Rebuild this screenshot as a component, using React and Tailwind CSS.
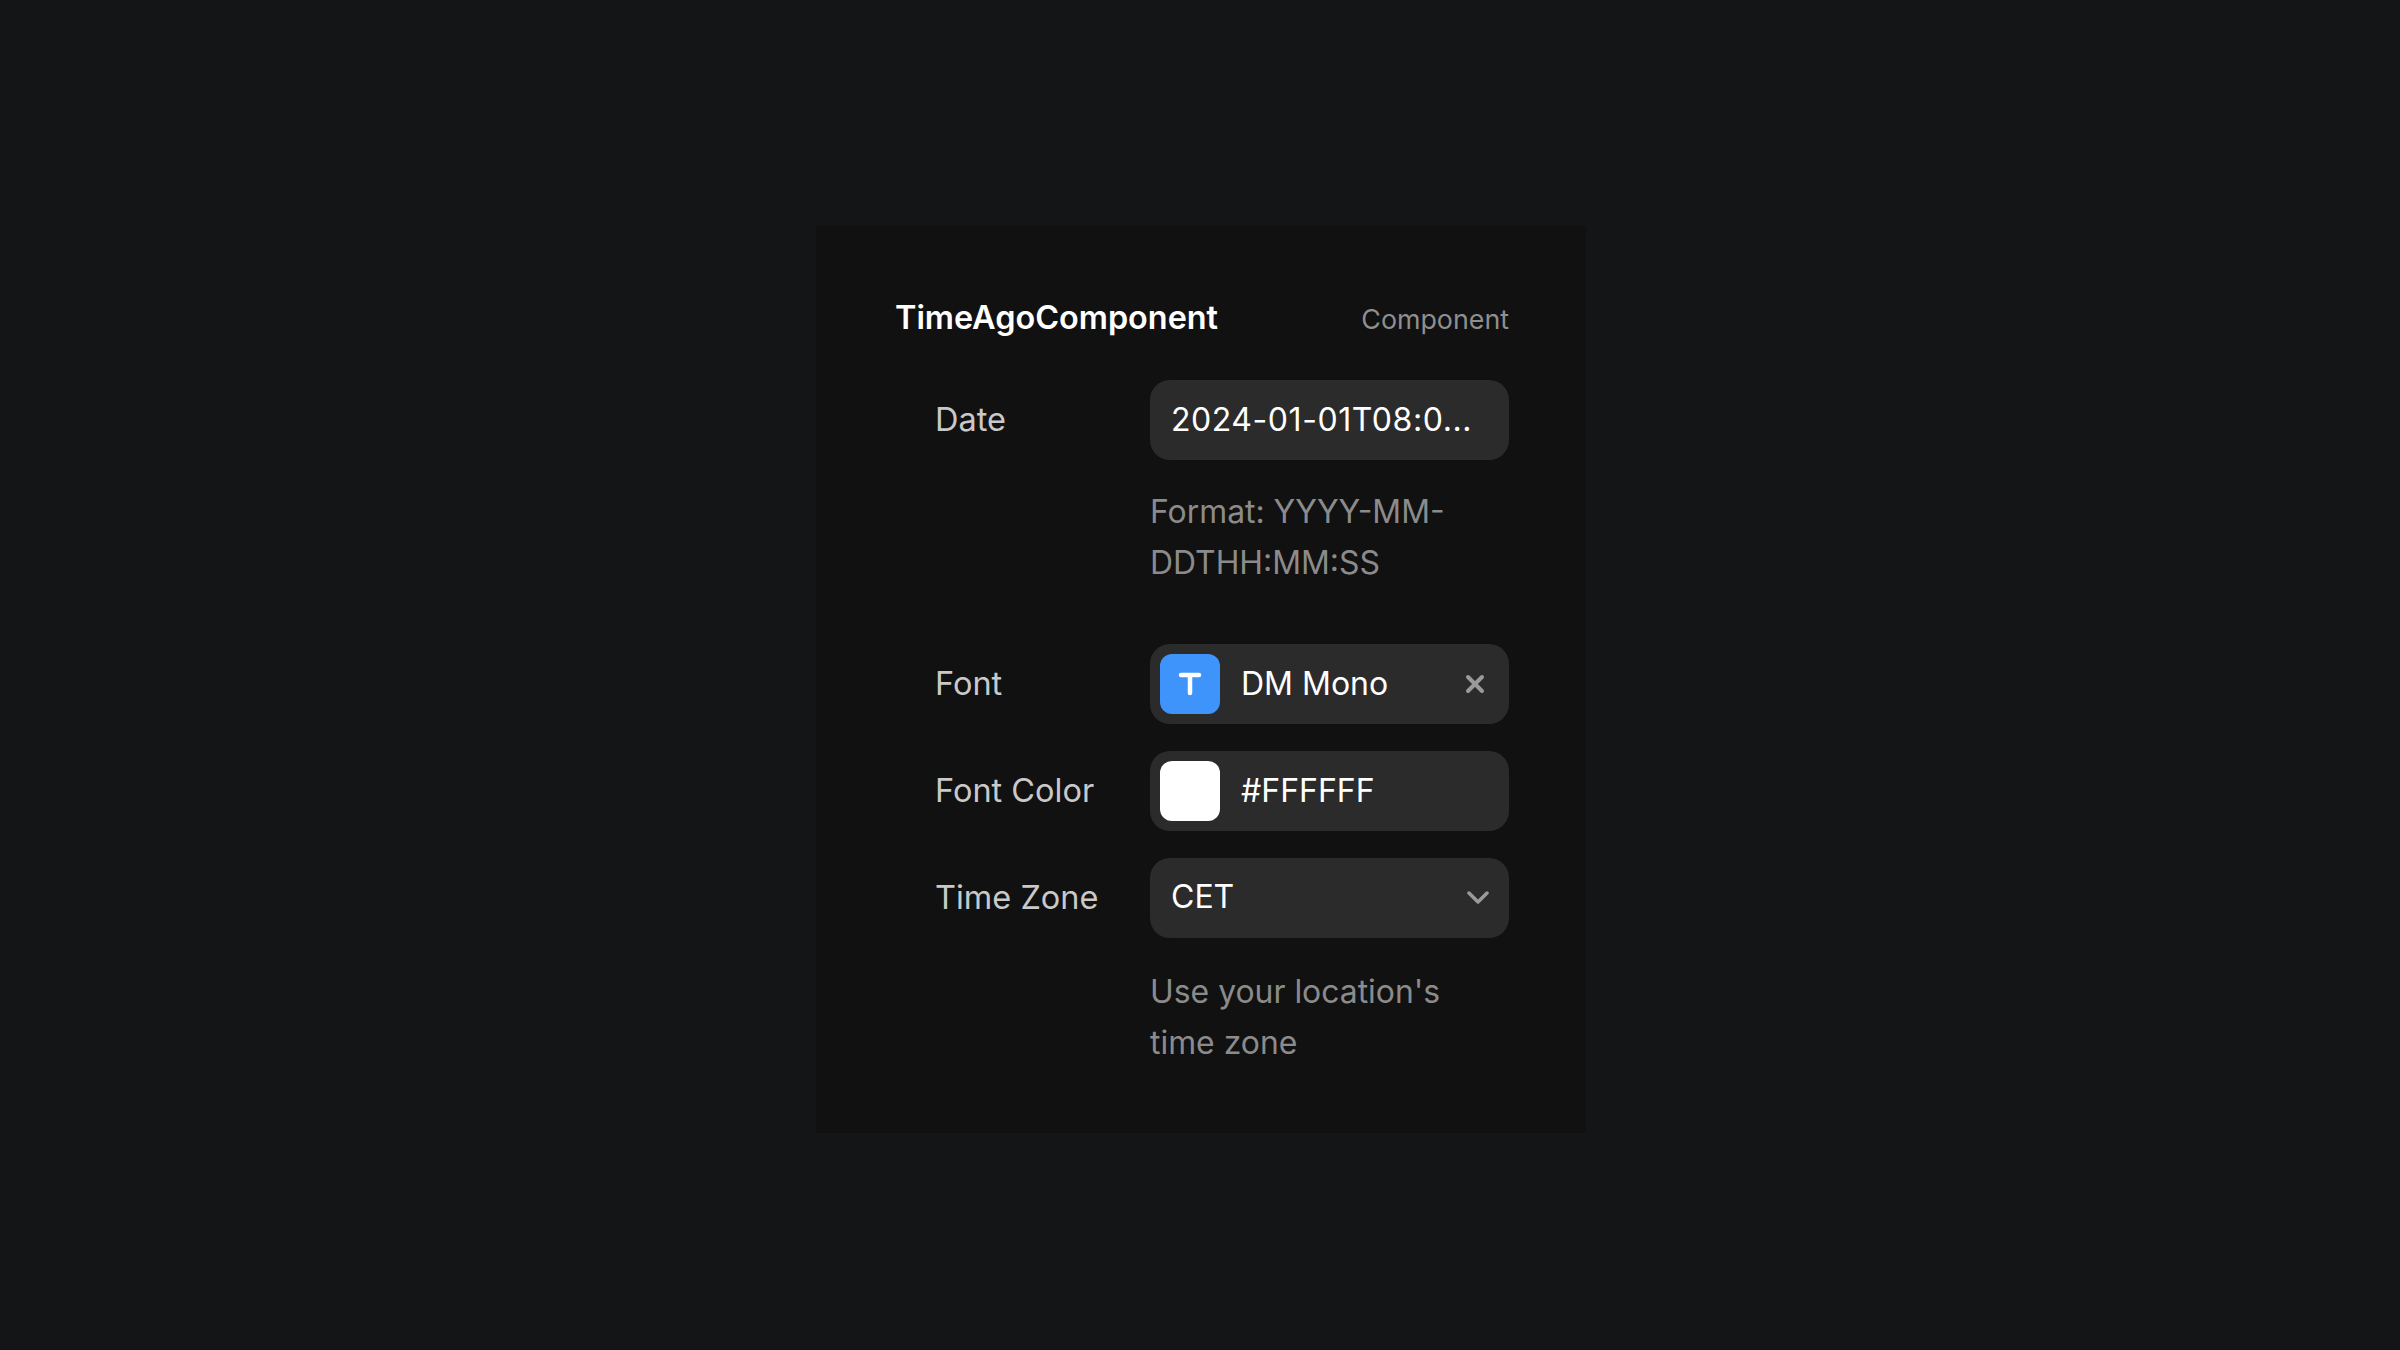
const FONT = "font-['Inter','Liberation_Sans',sans-serif]";

function Row({ label, children }) {
  return (
    <div className="flex items-center">
      <div className="w-[254px] shrink-0 pl-[39px] text-[32.5px] leading-[50px] text-[#c9c9c9] whitespace-nowrap">{label}</div>
      {children}
    </div>
  );
}

function Box({ children, className }) {
  return (
    <div className={"flex h-[80px] w-[359px] items-center rounded-[20px] bg-[#2b2b2b] text-[32px] text-white " + className}>
      {children}
    </div>
  );
}

function Help({ children }) {
  return <div className="ml-[254px] w-[320px] text-[31.9px] leading-[51px] text-[#8b8b8b]">{children}</div>;
}

export default function App() {
  return (
    <div className={"flex h-screen w-full justify-center bg-[#131517] pt-[226px] pl-[2px] " + FONT}>
      <div className="flex h-[907px] w-[770px] flex-col bg-[#111111] pl-[80px] pr-[77px] pt-[70px]">
        <div className="flex h-[44px] items-center justify-between">
          <span className="-ml-[1px] text-[32.4px] font-semibold text-white">TimeAgoComponent</span>
          <span className="pt-[3px] text-[26.8px] text-[#8f8f8f]">Component</span>
        </div>
        <div className="mt-[40px]">
          <Row label="Date">
            <Box className="pl-[21px]"><span className="whitespace-nowrap tracking-[0.55px]">2024-01-01T08:0...</span></Box>
          </Row>
          <div className="mt-[26px]"><Help>Format: YYYY-MM-DDTHH:MM:SS</Help></div>
        </div>
        <div className="mt-[56px] flex flex-col gap-[27px]">
          <Row label="Font">
            <Box className="pl-[10px] pr-[24px]">
              <div className="flex h-[60px] w-[60px] items-center justify-center rounded-[12px] bg-[#3e94fa]">
                <svg width="26" height="26" viewBox="0 0 26 26" fill="none" stroke="white" strokeWidth="4.5" strokeLinecap="round">
                  <path d="M4 4H22M13 4V22" />
                </svg>
              </div>
              <span className="ml-[21px] flex-1">DM Mono</span>
              <svg width="20" height="20" viewBox="0 0 20 20" fill="none" stroke="#9a9a9a" strokeWidth="4" strokeLinecap="round">
                <path d="M3 3L17 17M17 3L3 17" />
              </svg>
            </Box>
          </Row>
          <Row label="Font Color">
            <Box className="pl-[10px]">
              <div className="h-[60px] w-[60px] rounded-[12px] bg-white" />
              <span className="ml-[21px]">#FFFFFF</span>
            </Box>
          </Row>
          <Row label="Time Zone">
            <Box className="pl-[21px] pr-[20px]">
              <span className="flex-1 pb-[2px]">CET</span>
              <svg width="22" height="14" viewBox="0 0 22 14" fill="none" stroke="#9a9a9a" strokeWidth="3.5" strokeLinecap="round" strokeLinejoin="round">
                <path d="M2 2L11 11L20 2" />
              </svg>
            </Box>
          </Row>
        </div>
        <div className="mt-[28px]"><Help>Use your location's time zone</Help></div>
      </div>
    </div>
  );
}
